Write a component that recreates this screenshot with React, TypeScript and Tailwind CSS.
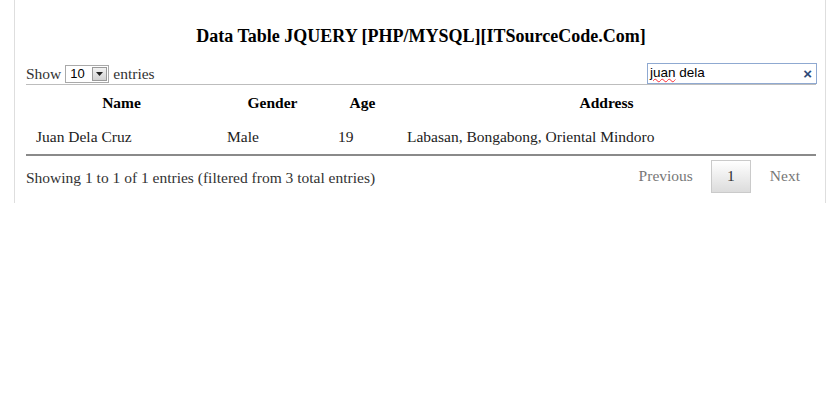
import { useState } from "react"

type Row = {
  name: string
  gender: string
  age: string
  address: string
}

const rows: Row[] = [
  { name: "Juan Dela Cruz", gender: "Male", age: "19", address: "Labasan, Bongabong, Oriental Mindoro" },
]

export default function App() {
  const [query, setQuery] = useState("juan dela")

  return (
    <div className="h-[420px] w-full bg-white font-['Liberation_Serif',serif] text-[15.5px] text-[#222]">
      <div className="ml-[14px] h-[203px] w-[812px] border-x border-[#dedede] pl-[11px] pr-[9px]">
        <h1 className="pt-[26px] text-center text-[18px] font-bold leading-[20px] text-black">
          Data Table JQUERY [PHP/MYSQL][ITSourceCode.Com]
        </h1>

        <div className="mt-[17px] flex h-[21px] items-center justify-between">
          <div className="flex items-center gap-[4px] text-[#333]">
            <span>Show</span>
            <div className="flex h-[18px] w-[44px] items-center border border-[#a9a9a9] bg-white">
              <span className="flex-1 pl-[4px] font-['Liberation_Sans',sans-serif] text-[13px] leading-none text-black">
                10
              </span>
              <span className="mr-[1px] flex h-[14px] w-[15px] items-center justify-center border border-[#9a9a9a] bg-gradient-to-b from-[#f2f2f2] to-[#d2d2d2]">
                <svg width="7" height="4" viewBox="0 0 7 4">
                  <path d="M0 0h7L3.5 4z" fill="#222" />
                </svg>
              </span>
            </div>
            <span>entries</span>
          </div>

          <div className="relative mr-[-1px] h-[21px] w-[170px] border border-[#8fa9d1] bg-white">
            <input
              value={query}
              onChange={(e) => setQuery(e.target.value)}
              className="hidden"
            />
            <span className="absolute left-[2px] top-[1px] font-['Liberation_Sans',sans-serif] text-[13.5px] leading-[16px] text-black">
              <span className="underline decoration-red-500 decoration-wavy decoration-1 underline-offset-1">juan</span> dela
            </span>
            <span className="absolute right-[4px] top-[1px] font-['Liberation_Sans',sans-serif] text-[15px] font-bold leading-[18px] text-[#2c4a78]">
              ×
            </span>
          </div>
        </div>

        <table className="w-full border-collapse">
          <thead>
            <tr className="h-[36px] border-t border-[#bdbdbd]">
              <th className="w-[191px] text-center font-bold text-black">Name</th>
              <th className="w-[111px] text-center font-bold text-black">Gender</th>
              <th className="w-[69px] text-center font-bold text-black">Age</th>
              <th className="text-center font-bold text-black">Address</th>
            </tr>
          </thead>
          <tbody>
            {rows.map((r) => (
              <tr key={r.name} className="h-[34px] border-b-2 border-[#8a8a8a]">
                <td className="pl-[10px]">{r.name}</td>
                <td className="pl-[10px]">{r.gender}</td>
                <td className="pl-[10px]">{r.age}</td>
                <td className="pl-[10px]">{r.address}</td>
              </tr>
            ))}
          </tbody>
        </table>

        <div className="flex items-start justify-between pt-[4px]">
          <div className="pt-[6px] text-[#333]">
            Showing 1 to 1 of 1 entries (filtered from 3 total entries)
          </div>
          <div className="mr-[16px] flex items-center text-[#777]">
            <span className="mr-[18px]">Previous</span>
            <span className="flex h-[33px] w-[40px] items-center justify-center border border-[#cacaca] bg-gradient-to-b from-white to-[#dcdcdc] text-[#333]">
              1
            </span>
            <span className="ml-[19px]">Next</span>
          </div>
        </div>
      </div>
    </div>
  )
}
